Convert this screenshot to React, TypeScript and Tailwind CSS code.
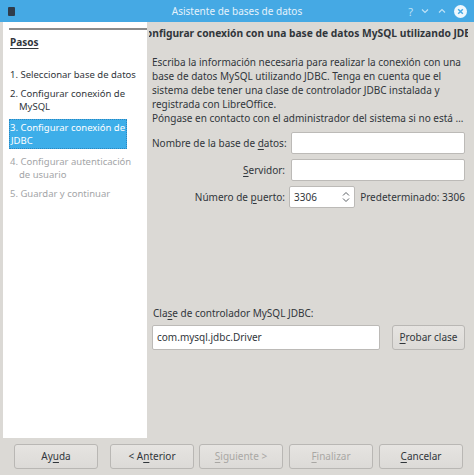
import React from "react";

const U: React.FC<{ children: React.ReactNode }> = ({ children }) => <span className="underline underline-offset-2">{children}</span>;

const Btn: React.FC<{ children: React.ReactNode; disabled?: boolean; className?: string }> = ({ children, disabled, className }) => (
  <div
    className={`flex h-[25px] shrink-0 items-center justify-center rounded-[3px] border border-[#b9b7b4] bg-gradient-to-b from-[#e6e4e1] to-[#dcdad7] text-[10px] ${
      disabled ? "text-[#a9a7a4]" : "text-[#31363b]"
    } ${className ?? ""}`}
  >
    {children}
  </div>
);

const Field: React.FC<{ tall?: boolean; className?: string; children?: React.ReactNode }> = ({ tall, className, children }) => (
  <div
    className={`flex items-center rounded-[2px] border border-[#bcbab7] bg-white px-[4px] text-[10px] text-[#31363b] ${
      tall ? "h-[25px]" : "h-[22px]"
    } ${className ?? ""}`}
  >
    {children}
  </div>
);

export default function App() {
  return (
    <div
      className="flex h-[475px] w-[474px] flex-col overflow-hidden bg-[#dbd9d5] text-[#31363b]"
      style={{ fontFamily: '"Noto Sans", "Open Sans", sans-serif' }}
    >
      {/* title bar */}
      <div className="relative flex h-[22px] shrink-0 items-center bg-[#45a9e4]">
        <div className="ml-[8px] h-[9px] w-[7px] rounded-[1px] bg-[#2f3c4b]" />
        <div className="absolute inset-x-0 text-center text-[10px] text-[#e4f2fb]">Asistente de bases de datos</div>
        <div className="ml-auto mr-[7px] flex items-center gap-[7px] text-[#bfe2f6]">
          <span className="text-[11px] leading-none">?</span>
          <svg width="10" height="10" viewBox="0 0 10 10">
            <path d="M2 3.5 L5 6.5 L8 3.5" stroke="currentColor" strokeWidth="1.2" fill="none" />
          </svg>
          <svg width="10" height="10" viewBox="0 0 10 10">
            <path d="M2 6.5 L5 3.5 L8 6.5" stroke="currentColor" strokeWidth="1.2" fill="none" />
          </svg>
          <svg width="13" height="13" viewBox="0 0 14 14">
            <circle cx="7" cy="7" r="7" fill="#eef7fd" />
            <path d="M4.5 4.5 L9.5 9.5 M9.5 4.5 L4.5 9.5" stroke="#45a9e4" strokeWidth="1.6" />
          </svg>
        </div>
      </div>

      <div className="flex min-h-0 flex-1">
        {/* steps panel */}
        <div className="ml-[3px] flex w-[144px] shrink-0 flex-col bg-white pl-[6px] pt-[6px] text-[9.5px]">
          <div className="h-[2px] bg-[#8c8c8c]" />
          <div className="mt-[5px] pl-[1px] text-[10px] font-bold text-[#31363b]">
            <U>Pasos</U>
          </div>
          <div className="mt-[18px] flex flex-col items-start gap-[6px] whitespace-nowrap leading-[13px]">
            <div className="pl-[1px]">1. Seleccionar base de datos</div>
            <div className="pl-[1px]">
              2. Configurar conexión de
              <br />
              <span className="pl-[9px]">MySQL</span>
            </div>
            <div className="border border-dotted border-[#2b86c0] bg-[#3daee9] py-[1px] pr-[1px] text-white">
              3. Configurar conexión de
              <br />
              <span className="pl-[1px]">JDBC</span>
            </div>
            <div className="pl-[1px] text-[#a3a5a7]">
              4. Configurar autenticación
              <br />
              <span className="pl-[9px]">de usuario</span>
            </div>
            <div className="pl-[1px] text-[#a3a5a7]">5. Guardar y continuar</div>
          </div>
        </div>

        {/* content */}
        <div className="flex min-w-0 flex-1 flex-col pl-[5px] pr-[9px] text-[10px]">
          <div className="-mx-[3px] mt-[4px] flex justify-center overflow-hidden whitespace-nowrap">
            <span className="shrink-0 text-[10.25px] font-bold">Configurar conexión con una base de datos MySQL utilizando JDBC</span>
          </div>

          <div className="mt-[14px] leading-[14px]">
            <div>Escriba la información necesaria para realizar la conexión con una</div>
            <div>base de datos MySQL utilizando JDBC. Tenga en cuenta que el</div>
            <div>sistema debe tener una clase de controlador JDBC instalada y</div>
            <div>registrada con LibreOffice.</div>
            <div className="truncate">Póngase en contacto con el administrador del sistema si no está seg...</div>
          </div>

          <div className="mt-[7px] grid grid-cols-[133px_1fr] items-center gap-x-[6px] gap-y-[5px] whitespace-nowrap">
            <div className="text-right">
              Nombre de la base de <U>d</U>atos:
            </div>
            <Field />
            <div className="text-right">
              <U>S</U>ervidor:
            </div>
            <Field />
            <div className="text-right">
              Número de <U>p</U>uerto:
            </div>
            <div className="flex items-center">
              <Field className="ml-[-2px] w-[66px] shrink-0 justify-between">
                <span>3306</span>
                <svg width="8" height="12" viewBox="0 0 8 12">
                  <path d="M1 4.5 L4 1.5 L7 4.5 M1 7.5 L4 10.5 L7 7.5" stroke="#5a5f64" strokeWidth="1" fill="none" />
                </svg>
              </Field>
              <span className="ml-auto">Predeterminado: 3306</span>
            </div>
          </div>

          <div className="mt-[98px] pl-[1px]">
            Cla<U>s</U>e de controlador MySQL JDBC:
          </div>
          <div className="mt-[4px] flex items-center gap-[12px]">
            <Field tall className="min-w-0 flex-1">
              com.mysql.jdbc.Driver
            </Field>
            <Btn className="w-[73px]">
              <U>P</U>robar clase
            </Btn>
          </div>
        </div>
      </div>

      {/* buttons */}
      <div className="flex h-[37px] shrink-0 items-center px-[14px]">
        <Btn className="w-[84px]">
          Ay<U>u</U>da
        </Btn>
        <Btn className="ml-[12px] w-[84px]">
          &lt; A<U>n</U>terior
        </Btn>
        <Btn disabled className="ml-[5px] w-[84px]">
          <U>S</U>iguiente &gt;
        </Btn>
        <Btn disabled className="ml-[6px] w-[84px]">
          <U>F</U>inalizar
        </Btn>
        <Btn className="ml-[6px] w-[84px]">
          <U>C</U>ancelar
        </Btn>
      </div>
    </div>
  );
}
